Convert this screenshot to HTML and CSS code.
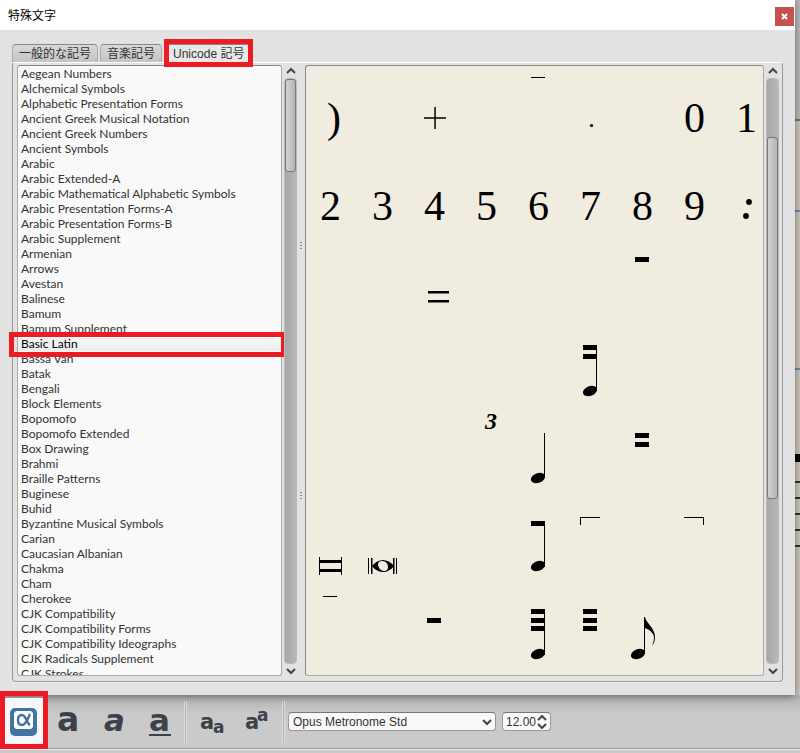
FILE: index.html
```html
<!DOCTYPE html>
<html lang="ja">
<head>
  <meta charset="UTF-8">
  <meta name="viewport" content="width=device-width, initial-scale=1.0">
  <title>特殊文字</title>
  <link rel="stylesheet" href="styles.css">
</head>
<body>
  <svg class="defs" aria-hidden="true">
    <defs>
      <ellipse id="head" cx="24" cy="57" rx="7.4" ry="4.8" transform="rotate(-22 24 57)"/>
      <g id="note"><use href="#head"/><path d="M30 13h1v43h-1z"/></g>
      <path id="up" d="M1 7 5 3l4 4" fill="none" stroke="#444" stroke-width="2"/>
      <path id="down" d="M1 3l4 4 4-4" fill="none" stroke="#444" stroke-width="2"/>
    </defs>
  </svg>

  <div class="workspace">
    <main class="dialog">
      <header class="titlebar">
        <h1>特殊文字</h1>
        <button class="close" aria-label="閉じる"><svg width="7" height="7" viewBox="0 0 7 7"><path d="M1 1l5 5M6 1L1 6" stroke="#fff" stroke-width="2"/></svg></button>
      </header>

      <div class="content">
        <div class="tabs">
          <button class="tab">一般的な記号</button>
          <button class="tab">音楽記号</button>
          <button class="tab active">Unicode 記号</button>
        </div>

        <div class="frame">
          <div class="list-box">
            <ul class="blocks">
              <li>Aegean Numbers</li>
              <li>Alchemical Symbols</li>
              <li>Alphabetic Presentation Forms</li>
              <li>Ancient Greek Musical Notation</li>
              <li>Ancient Greek Numbers</li>
              <li>Ancient Symbols</li>
              <li>Arabic</li>
              <li>Arabic Extended-A</li>
              <li>Arabic Mathematical Alphabetic Symbols</li>
              <li>Arabic Presentation Forms-A</li>
              <li>Arabic Presentation Forms-B</li>
              <li>Arabic Supplement</li>
              <li>Armenian</li>
              <li>Arrows</li>
              <li>Avestan</li>
              <li>Balinese</li>
              <li>Bamum</li>
              <li>Bamum Supplement</li>
              <li class="selected">Basic Latin</li>
              <li>Bassa Vah</li>
              <li>Batak</li>
              <li>Bengali</li>
              <li>Block Elements</li>
              <li>Bopomofo</li>
              <li>Bopomofo Extended</li>
              <li>Box Drawing</li>
              <li>Brahmi</li>
              <li>Braille Patterns</li>
              <li>Buginese</li>
              <li>Buhid</li>
              <li>Byzantine Musical Symbols</li>
              <li>Carian</li>
              <li>Caucasian Albanian</li>
              <li>Chakma</li>
              <li>Cham</li>
              <li>Cherokee</li>
              <li>CJK Compatibility</li>
              <li>CJK Compatibility Forms</li>
              <li>CJK Compatibility Ideographs</li>
              <li>CJK Radicals Supplement</li>
              <li>CJK Strokes</li>
            </ul>
            <div class="row-mark"></div>
          </div>
          <div class="scrollbar">
            <svg width="10" height="10"><use href="#up"/></svg>
            <div class="track"><div class="thumb list-thumb"></div></div>
            <svg width="10" height="10"><use href="#down"/></svg>
          </div>
          <div class="splitter"><i></i><i></i></div>

          <div class="glyph-box">
            <div class="glyphs">
              <div class="cell">)</div>
              <div class="cell"></div>
              <div class="cell"><svg viewBox="0 0 52 88"><path d="M14 43.300h22v1.500H14zM24.300 33h1.500v22h-1.500z"/></svg></div>
              <div class="cell"></div>
              <div class="cell"><svg viewBox="0 0 52 88"><path d="M17 3h14v1H17z"/></svg></div>
              <div class="cell"><svg viewBox="0 0 52 88"><circle cx="25.5" cy="51.5" r="1.6"/></svg></div>
              <div class="cell"></div>
              <div class="cell">0</div>
              <div class="cell">1</div>

              <div class="cell">2</div>
              <div class="cell">3</div>
              <div class="cell">4</div>
              <div class="cell">5</div>
              <div class="cell">6</div>
              <div class="cell">7</div>
              <div class="cell">8</div>
              <div class="cell">9</div>
              <div class="cell"><svg viewBox="0 0 52 88"><circle cx="27" cy="40" r="2.9"/><circle cx="24" cy="54" r="2.9"/></svg></div>

              <div class="cell"></div>
              <div class="cell"></div>
              <div class="cell"><svg viewBox="0 0 52 88"><path d="M18 41h21v2.500H18zM18 50h21v2.500H18z"/></svg></div>
              <div class="cell"></div>
              <div class="cell"></div>
              <div class="cell"></div>
              <div class="cell"><svg viewBox="0 0 52 88"><path d="M17 7h14v5H17z"/></svg></div>
              <div class="cell"></div>
              <div class="cell"></div>

              <div class="cell"></div>
              <div class="cell"></div>
              <div class="cell"></div>
              <div class="cell"></div>
              <div class="cell"></div>
              <div class="cell"><svg viewBox="0 0 52 88"><path d="M17 7h14v5H17zM17 16h14v5H17zM30 7h1v46h-1z"/><use href="#head" y="-4"/></svg></div>
              <div class="cell"></div>
              <div class="cell"></div>
              <div class="cell"></div>

              <div class="cell"></div>
              <div class="cell"></div>
              <div class="cell"></div>
              <div class="cell"><svg viewBox="0 0 52 88"><text class="tuplet" x="29" y="3" text-anchor="middle">3</text></svg></div>
              <div class="cell"><svg viewBox="0 0 52 88"><use href="#note" y="-5"/><path d="M30 7h1v6h-1z"/></svg></div>
              <div class="cell"></div>
              <div class="cell"><svg viewBox="0 0 52 88"><path d="M17 7h14v5H17zM17 16h14v5H17z"/></svg></div>
              <div class="cell"></div>
              <div class="cell"></div>

              <div class="cell"><svg viewBox="0 0 52 88"><path d="M13 43h1v18h-1zM35 43h1v18h-1zM13 46h22v3H13zM13 55h22v3H13z"/></svg></div>
              <div class="cell"><svg viewBox="0 0 52 88"><path d="M10 44h1v16h-1zM13 44h1.500v16H13zM35 44h1.500v16H35zM38 44h1v16h-1z"/><path fill-rule="evenodd" d="M14 52c3-4 7-6 11-6s8 2 11 6c-3 4-7 6-11 6s-8-2-11-6zM20 50c0 4 3 7 6 7s4-2 4-4c0-3-2-6-6-6-2 0-4 1-4 3z"/></svg></div>
              <div class="cell"></div>
              <div class="cell"></div>
              <div class="cell"><svg viewBox="0 0 52 88"><path d="M17 7h14v5H17zM30 7h1v46h-1z"/><use href="#head" y="-5"/></svg></div>
              <div class="cell"><svg viewBox="0 0 52 88"><path d="M14 3h20v1H15v7h-1z"/></svg></div>
              <div class="cell"></div>
              <div class="cell"><svg viewBox="0 0 52 88"><path d="M14 3h20v8h-1V4H14z"/></svg></div>
              <div class="cell"></div>

              <div class="cell"><svg viewBox="0 0 52 88"><path d="M17-6h14v1H17z"/></svg></div>
              <div class="cell"></div>
              <div class="cell"><svg viewBox="0 0 52 88"><path d="M17 16h14v5H17z"/></svg></div>
              <div class="cell"></div>
              <div class="cell"><svg viewBox="0 0 52 88"><path d="M17 7h14v5H17zM17 16h14v5H17zM17 24h14v5H17zM30 7h1v46h-1z"/><use href="#head" y="-5"/></svg></div>
              <div class="cell"><svg viewBox="0 0 52 88"><path d="M17 7h14v5H17zM17 16h14v5H17zM17 24h14v5H17z"/></svg></div>
              <div class="cell"><svg viewBox="0 0 52 88"><use href="#head" x="-4" y="-5"/><path d="M26 15h1c1 6 10 11 10 20 0 4-1 6-3 9 1-3 2-5 2-8 0-5-4-8-9-10v26h-1z"/></svg></div>
              <div class="cell"></div>
              <div class="cell"></div>
            </div>
          </div>
          <div class="scrollbar">
            <svg width="10" height="10"><use href="#up"/></svg>
            <div class="track"><div class="thumb glyph-thumb"></div></div>
            <svg width="10" height="10"><use href="#down"/></svg>
          </div>
        </div>
      </div>
    </main>

    <!-- edge of the score window behind the dialog -->
    <aside class="score">
      <div class="score-head"></div>
      <svg width="5" height="574" viewBox="0 0 5 574"><path d="M0 0h5v2H0z" fill="#77756f"/><path d="M0 91h5v2H0zM0 249h5v2H0z" fill="#6d91b5"/><path d="M0 335h5v8H0z"/><path d="M0 362h5v2H0zM0 378h5v2H0zM0 394h5v2H0zM0 410h5v2H0zM0 426h5v2H0z" fill="#333"/></svg>
    </aside>
  </div>

  <footer class="toolbar">
    <button class="tool marked" aria-label="特殊文字">
      <svg width="28" height="28" viewBox="0 0 28 28"><rect width="27" height="28" rx="5" fill="#4272a6"/><path d="M6 3h15l2 2v14l-2 2H6l-2-2V5z" fill="#fff"/><path d="M20 6c-2 4-4 11-8 11-3 0-4-2-4-5s1-5 4-5c4 0 5 9 8 10" fill="none" stroke="#4272a6" stroke-width="2.500"/></svg>
    </button>
    <button class="tool" aria-label="太字"><svg width="28" height="28"><text class="big" x="2" y="23">a</text></svg></button>
    <button class="tool" aria-label="斜体"><svg width="28" height="28"><text class="slant" x="4" y="23">a</text></svg></button>
    <button class="tool" aria-label="下線"><svg width="28" height="28"><text class="mid" x="4" y="23">a</text><path d="M4 26h22v2H4z" fill="#3d4149"/></svg></button>
    <span class="divider"></span>
    <button class="tool" aria-label="下付き"><svg width="28" height="28"><text class="small" x="2" y="21">a</text><text class="tiny" x="15" y="25">a</text></svg></button>
    <button class="tool" aria-label="上付き"><svg width="28" height="28"><text class="small" x="2" y="21">a</text><text class="tiny" x="14" y="13">a</text></svg></button>
    <span class="divider"></span>
    <div class="field font">
      <select aria-label="フォント"><option>Opus Metronome Std</option></select>
      <svg width="10" height="10"><use href="#down"/></svg>
    </div>
    <div class="field size">
      <input type="text" aria-label="サイズ" value="12.00">
      <svg width="10" height="14" viewBox="0 0 10 14"><path d="M1 5l4-4 4 4M1 9l4 4 4-4" fill="none" stroke="#444" stroke-width="2"/></svg>
    </div>
  </footer>
  <div class="statusbar"></div>
</body>
</html>
```
FILE: styles.css
```css
* { margin: 0; padding: 0; box-sizing: border-box; }

body {
  display: flex;
  flex-direction: column;
  height: 100vh;
  overflow: hidden;
  background: #cacaca;
  color: #333;
  font-family: "Liberation Sans", "Noto Sans CJK JP", sans-serif;
  font-size: 12px;
}

button, input, select {
  border: none;
  background: none;
  font: inherit;
  color: inherit;
}

svg { display: block; }

.defs {
  position: absolute;
  width: 0;
  height: 0;
}

.workspace {
  display: flex;
  flex: 1;
  min-height: 0;
}

.dialog {
  position: relative;
  z-index: 1;
  display: flex;
  flex-direction: column;
  flex: 1;
  min-width: 0;
  background: #e2e2e2;
  box-shadow: 0 1px 8px rgba(0, 0, 0, 0.5);
}

.titlebar {
  display: flex;
  align-items: center;
  justify-content: space-between;
  height: 30px;
  padding: 2px 1px 0 8px;
  background: #fff;
}

.titlebar h1 {
  padding-bottom: 4px;
  color: #000;
  font-size: 12px;
  font-weight: normal;
}

.close {
  display: flex;
  align-items: center;
  justify-content: center;
  width: 19px;
  height: 19px;
  background: #c75050;
}

.content {
  display: flex;
  flex-direction: column;
  flex: 1;
  min-height: 0;
  padding: 14px 12px 13px 12px;
}

.tabs {
  display: flex;
  gap: 2px;
  height: 18px;
}

.tab {
  position: relative;
  height: 18px;
  padding: 0 6px;
  border: 1px solid #aaa;
  border-top-color: #888;
  border-bottom: none;
  border-radius: 4px 4px 0 0;
  background: linear-gradient(#d8d8d8, #c4c4c4);
  line-height: 18px;
  white-space: nowrap;
}

.tab.active {
  padding: 0 8px;
  background: #e8e8e8;
}

.tab.active::after {
  content: '';
  position: absolute;
  z-index: 2;
  inset: -6px -1px -5px;
  border: 5px solid #ed1c24;
}

.frame {
  display: flex;
  flex: 1;
  min-height: 0;
  padding: 2px 3px 5px 4px;
  border: 1px solid #999;
  border-top: 1px solid #fff;
  border-radius: 4px;
  box-shadow: 0 1px #f4f4f4;
}

.list-box {
  position: relative;
  width: 265px;
}

.blocks {
  height: 100%;
  overflow: hidden;
  border: 1px solid #aaa;
  border-top: 1px solid #888;
  border-radius: 3px;
  background: #f9f9f9;
  list-style: none;
  font-family: Lato, "Open Sans", sans-serif;
}

.blocks li {
  height: 15px;
  padding-left: 3px;
  line-height: 15px;
  white-space: nowrap;
}

.blocks .selected {
  background: linear-gradient(#f9f9f9, #ececec);
  color: #000;
}

.row-mark {
  position: absolute;
  top: calc(18 * 15px - 3px);
  left: -8px;
  right: -4px;
  height: 25px;
  border: 5px solid #ed1c24;
}

.scrollbar {
  display: flex;
  flex-direction: column;
  align-items: center;
  gap: 2px;
  width: 13px;
  margin-left: 2px;
  padding-top: 1px;
}

.track {
  position: relative;
  flex: 1;
  width: 13px;
  border: 1px solid #bbb;
  border-radius: 4px;
  background: linear-gradient(90deg, #a6a6a6, #b8b8b8);
}

.thumb {
  position: absolute;
  left: 0;
  right: 0;
  border: 1px solid #777;
  border-radius: 3px;
  background: linear-gradient(90deg, #d2d2d2, #b4b4b4);
}

.list-thumb {
  top: 0;
  height: 16%;
}

.glyph-thumb {
  top: 10%;
  height: 62%;
}

.splitter {
  display: flex;
  flex-direction: column;
  align-items: center;
  justify-content: center;
  gap: 242px;
  width: 8px;
}

.splitter i {
  width: 2px;
  height: 8px;
  background: repeating-linear-gradient(#888 0 1px, #e2e2e2 1px 3px);
}

.glyph-box {
  flex: 1;
  min-width: 0;
  overflow: hidden;
  border: 1px solid #aaa;
  border-top: 1px solid #888;
  border-left: 1px solid #888;
  border-radius: 3px;
  background: #f0ece0;
}

.glyphs {
  display: grid;
  grid-template-columns: repeat(9, 52px);
  grid-auto-rows: 88px;
  padding-top: 8px;
  color: #000;
  font-family: "Liberation Serif", serif;
  font-size: 42px;
  line-height: 88px;
}

.cell {
  padding-right: 17px;
  text-align: right;
}

.cell svg {
  width: 52px;
  height: 88px;
  overflow: visible;
}

.tuplet {
  font-size: 24px;
  font-weight: bold;
  font-style: italic;
}

.score {
  width: 5px;
  background: #cfcabc;
}

.score-head {
  height: 119px;
  background: #bcbcbc;
}

.toolbar {
  display: flex;
  align-items: center;
  height: 54px;
  border-bottom: 1px solid #999;
  background: linear-gradient(#b4b4b4, #cacaca 20px);
}

.tool {
  position: relative;
  display: flex;
  align-items: center;
  justify-content: center;
  width: 45px;
  height: 48px;
}

.tool svg { overflow: visible; }

.tool.marked {
  z-index: 2;
  width: 48px;
  margin-right: -2px;
  background: #f8f8f8;
}

.tool.marked::after {
  content: '';
  position: absolute;
  inset: -7px 0 -3px;
  border: 5px solid #ed1c24;
}

.tool text {
  fill: #3d4149;
  font-family: "DejaVu Sans", sans-serif;
  font-weight: bold;
}

.tool .big { font-size: 33px; }
.tool .mid { font-size: 31px; }
.tool .slant { font-size: 31px; font-style: italic; }
.tool .small { font-size: 21px; }
.tool .tiny { font-size: 17px; }

.divider {
  width: 3px;
  height: 42px;
  margin: 0 2px 0 3px;
  border: 1px solid #dedede;
  border-width: 0 1px;
  background: #b0b0b0;
}

.field {
  display: flex;
  align-items: center;
  height: 19px;
  margin-left: 1px;
  border: 1px solid #999;
  border-top-color: #777;
  border-radius: 4px;
  background: #f9f9f9;
}

.field select {
  flex: 1;
  appearance: none;
  padding-left: 4px;
}

.field input {
  width: 34px;
  padding-left: 3px;
}

.field.font {
  width: 208px;
  padding-right: 3px;
}

.field.size {
  width: 49px;
  margin-left: 6px;
}

.statusbar {
  height: 4px;
  border-top: 1px solid #eee;
}
```
